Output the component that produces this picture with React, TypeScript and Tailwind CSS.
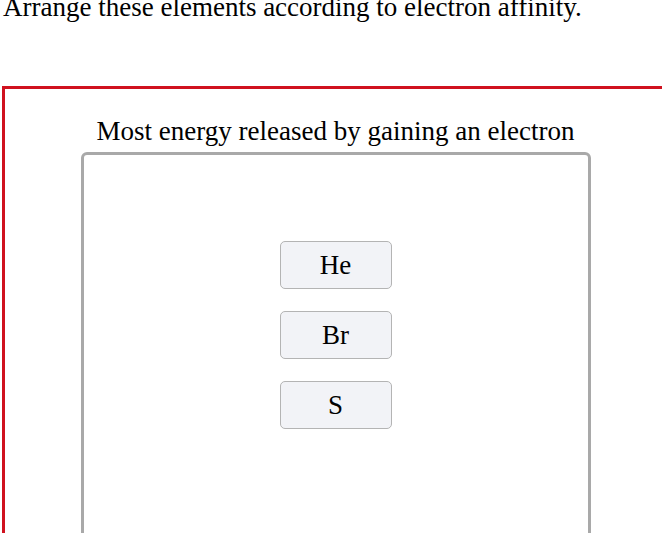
import React from "react";

const items = ["He", "Br", "S"];

export default function App() {
  return (
    <div
      className="h-[533px] w-full overflow-hidden bg-white text-black"
      style={{ fontFamily: '"Liberation Serif", "Times New Roman", serif' }}
    >
      {/* prompt */}
      <p className="-mt-[8px] pl-[3px] text-[27px] leading-[31px]">
        Arrange these elements according to electron affinity.
      </p>

      {/* ranking panel */}
      <div className="ml-[2px] mt-[63px] w-[664px] border-l-[3px] border-t-[3px] border-[#d0121f] pt-[27px]">
        <div className="text-center text-[27px] leading-[31px]">
          Most energy released by gaining an electron
        </div>
        <div className="mx-auto mt-[5px] h-[420px] w-[510px] rounded-[6px] border-[3px] border-[#a9a9a9] pt-[86px]">
          <div className="flex flex-col items-center gap-[22px]">
            {items.map((el) => (
              <div
                key={el}
                className="flex h-[48px] w-[112px] items-center justify-center rounded-[5px] border border-[#b4b4b4] bg-[#f2f3f7] text-[27px]"
              >
                {el}
              </div>
            ))}
          </div>
        </div>
      </div>
    </div>
  );
}
